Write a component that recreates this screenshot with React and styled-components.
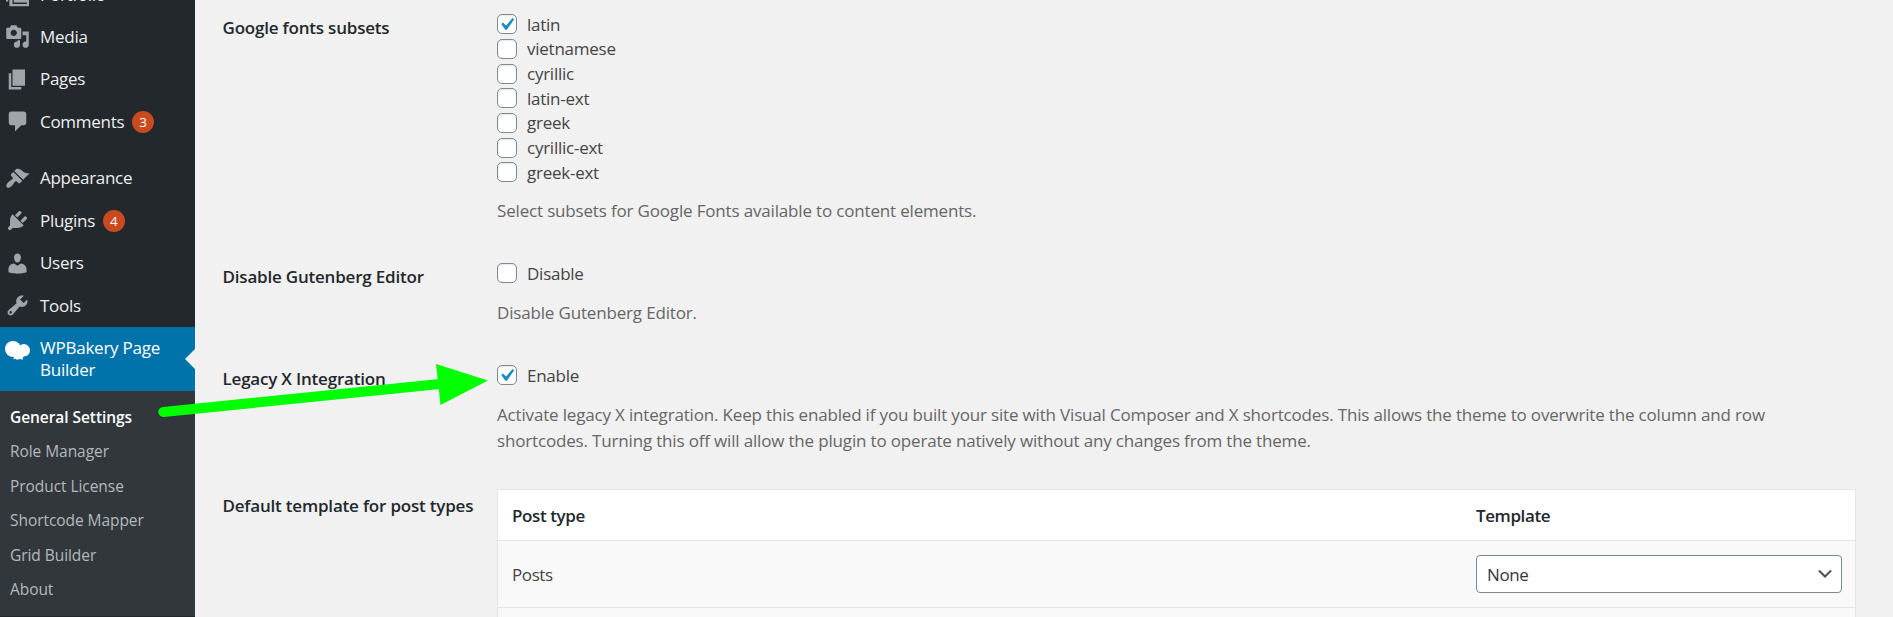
import styled, { createGlobalStyle } from "styled-components";

const icons = {
  portfolio:
    "M3.500 5h15.700v13.600H3.500zM6 5v11.700h11.500v-1.100H7V5zM.8 2h1.700v12.800H.8z",
  media:
    "M13 11V4c0-.55-.45-1-1-1h-1.670L9 1H5L3.670 3H2c-.55 0-1 .45-1 1v7c0 .55.45 1 1 1h10c.55 0 1-.45 1-1zM7 4.500c1.380 0 2.500 1.120 2.500 2.500S8.380 9.500 7 9.500 4.500 8.380 4.500 7 5.620 4.500 7 4.500zM14 6h5v10.500c0 1.380-1.120 2.500-2.500 2.500S14 17.880 14 16.500s1.120-2.500 2.500-2.500c.17 0 .34.02.5.05V9h-3V6zm-4 8.050V13h2v3.500c0 1.380-1.120 2.500-2.500 2.500S7 17.880 7 16.500 8.120 14 9.500 14c.17 0 .34.02.5.05z",
  pages: "M6 15V2h10v13H6zm-1 1h8v2H3V5h2v11z",
  comments:
    "M5 2h10c1.100 0 2 .9 2 2v7c0 1.100-.9 2-2 2h-2l-5 5v-5H5c-1.100 0-2-.9-2-2V4c0-1.100.9-2 2-2z",
  appearance:
    "M14.480 11.060L7.410 3.990l1.500-1.500c.5-.56 2.300-.47 3.510.32 1.210.8 1.430 1.280 2.910 2.100 1.180.64 2.450 1.260 4.450.85zm-.71.71L6.700 4.700 4.930 6.470c-.39.39-.39 1.020 0 1.410l1.060 1.060c.39.39.39 1.030 0 1.420-.6.6-1.430 1.110-2.210 1.690-.35.26-.7.53-1.010.84C1.430 14.230.4 16.080 1.400 17.070c.99 1 2.840-.03 4.180-1.360.31-.31.58-.66.85-1.020.57-.78 1.080-1.610 1.690-2.210.39-.39 1.020-.39 1.410 0l1.060 1.060c.39.39 1.020.39 1.410 0z",
  plugins:
    "M13.110 4.360L9.870 7.600 8 5.730l3.240-3.240c.35-.34 1.050-.2 1.560.32.52.51.66 1.210.31 1.550zm-8 1.770l.91-1.120 9.010 9.010-1.190.84c-.71.71-2.630 1.160-3.820 1.160H6.140L4.900 17.260c-.59.59-1.540.59-2.120 0-.59-.58-.59-1.530 0-2.120l1.240-1.240v-3.880c0-1.130.4-3.190 1.090-3.890zm7.260 3.970l3.240-3.240c.34-.35 1.040-.21 1.550.31.52.51.66 1.210.31 1.550l-3.240 3.250z",
  users:
    "M10 9.250c-2.270 0-2.730-3.440-2.730-3.440C7 4.020 7.820 2 9.970 2c2.160 0 2.980 2.020 2.710 3.810 0 0-.41 3.440-2.680 3.440zm0 2.570L12.720 10c2.390 0 4.520 2.330 4.520 4.530v2.490s-3.650 1.130-7.240 1.130c-3.650 0-7.240-1.130-7.240-1.130v-2.490c0-2.250 1.940-4.480 4.470-4.480z",
  tools:
    "M16.680 9.770c-1.340 1.340-3.300 1.670-4.950.99l-5.410 6.520c-.99.99-2.590.99-3.580 0s-.99-2.590 0-3.570l6.520-5.420c-.68-1.650-.35-3.610.99-4.950 1.280-1.280 3.120-1.620 4.720-1.060l-2.890 2.890 2.820 2.820 2.860-2.870c.53 1.580.18 3.390-1.080 4.650zM3.810 16.210c.4.39 1.040.39 1.430 0 .4-.4.4-1.040 0-1.430-.39-.4-1.030-.4-1.430 0-.39.39-.39 1.030 0 1.430z",
};

const topMenu = [
  { icon: "portfolio", label: "Portfolio" },
  { icon: "media", label: "Media" },
  { icon: "pages", label: "Pages" },
  { icon: "comments", label: "Comments", count: 3 },
];

const mainMenu = [
  { icon: "appearance", label: "Appearance" },
  { icon: "plugins", label: "Plugins", count: 4 },
  { icon: "users", label: "Users" },
  { icon: "tools", label: "Tools" },
];

const subMenu = [
  "General Settings",
  "Role Manager",
  "Product License",
  "Shortcode Mapper",
  "Grid Builder",
  "About",
];

const subsets = [
  "latin",
  "vietnamese",
  "cyrillic",
  "latin-ext",
  "greek",
  "cyrillic-ext",
  "greek-ext",
];

const MenuItem = ({ icon, label, count }) => (
  <MenuLink>
    <svg viewBox="0 0 20 20">
      <path fillRule="evenodd" d={icons[icon]} />
    </svg>
    <span>{label}</span>
    {count && <Badge>{count}</Badge>}
  </MenuLink>
);

const Option = ({ label, checked }) => (
  <OptionLabel>
    <CheckBox>
      {checked && (
        <svg viewBox="0 0 20 20">
          <path d="M14.830 4.890l1.340.94-5.810 8.380H9.020L5.780 9.670l1.340-1.250 2.570 2.400z" />
        </svg>
      )}
    </CheckBox>
    {label}
  </OptionLabel>
);

const App = () => {
  return (
    <>
      <GlobalStyle />
      <Page>
        <Sidebar>
          <Menu>
            {topMenu.map((item) => (
              <MenuItem key={item.label} {...item} />
            ))}
            <Separator />
            {mainMenu.map((item) => (
              <MenuItem key={item.label} {...item} />
            ))}
          </Menu>
          <ActiveLink>
            <svg viewBox="0 0 25 20">
              <circle cx="8" cy="8" r="8" />
              <circle cx="18.800" cy="9.300" r="6.200" />
              <path d="M7 13h14l-3 3.200-.5 2.500-2.500-.8-3 .8-1.500-1-2.500.6 1.500-2.800z" />
            </svg>
            <span>WPBakery Page Builder</span>
          </ActiveLink>
          <SubMenu>
            {subMenu.map((label, i) => (
              <SubLink key={label} $current={i === 0}>
                {label}
              </SubLink>
            ))}
          </SubMenu>
        </Sidebar>

        <Content>
          <Field $height={249}>
            <FieldName>Google fonts subsets</FieldName>
            <div>
              {subsets.map((label, i) => (
                <Option key={label} label={label} checked={i === 0} />
              ))}
              <Description>
                Select subsets for Google Fonts available to content elements.
              </Description>
            </div>
          </Field>
          <Field $height={102}>
            <FieldName>Disable Gutenberg Editor</FieldName>
            <div>
              <Option label="Disable" />
              <Description>Disable Gutenberg Editor.</Description>
            </div>
          </Field>
          <Field $height={127}>
            <FieldName>Legacy X Integration</FieldName>
            <div>
              <Option label="Enable" checked />
              <Description>
                Activate legacy X integration. Keep this enabled if you built
                your site with Visual Composer and X shortcodes. This allows the
                theme to overwrite the column and row
                <br />
                shortcodes. Turning this off will allow the plugin to operate
                natively without any changes from the theme.
              </Description>
            </div>
          </Field>
          <Field $height={140}>
            <FieldName>Default template for post types</FieldName>
            <Table>
              <HeadRow>
                <span>Post type</span>
                <span>Template</span>
              </HeadRow>
              <Row>
                <span>Posts</span>
                <Select>
                  None
                  <svg viewBox="0 0 20 20">
                    <path d="M5 6l5 5 5-5 2 1-7 7-7-7 2-1z" />
                  </svg>
                </Select>
              </Row>
              <Row />
            </Table>
          </Field>
        </Content>

        <Arrow viewBox="0 0 340 60">
          <path d="M13.300 37L290 9" />
          <polygon points="286,-11 338,5.500 290.500,30" />
        </Arrow>
      </Page>
    </>
  );
};

const GlobalStyle = createGlobalStyle`
  * {
    box-sizing: border-box;
  }
  body {
    margin: 0;
    overflow: hidden;
    background: #f1f1f1;
    color: #444;
    font-family: "Open Sans", "Noto Sans", sans-serif;
    font-size: 17px;
  }
`;

const Page = styled.div`
  position: relative;
  display: flex;
  height: 617px;
  overflow: hidden;
`;

const Sidebar = styled.nav`
  flex: 0 0 195px;
  background: #23282d;
`;

const Menu = styled.div`
  margin-top: -27px;
  height: 354px;
`;

const MenuLink = styled.a`
  display: flex;
  align-items: center;
  height: 42.5px;
  padding-left: 5px;
  color: #eee;
  font-size: 17px;
  letter-spacing: -0.28px;
  &:first-child {
    padding-top: 2px;
  }
  svg {
    width: 25px;
    height: 25px;
    margin-right: 10px;
    fill: #a0a5aa;
  }
  span {
    line-height: 22px;
  }
`;

const Separator = styled.div`
  height: 14px;
`;

const Badge = styled.b`
  display: grid;
  place-items: center;
  width: 22.5px;
  height: 22.5px;
  margin-left: 7.5px;
  border-radius: 50%;
  background: #ca4a1f;
  color: #fff;
  font-size: 13.5px;
  font-weight: 500;
  letter-spacing: 0;
`;

const ActiveLink = styled.a`
  position: relative;
  display: flex;
  align-items: flex-start;
  height: 64px;
  padding: 10px 20px 0 5px;
  background: #0073aa;
  color: #fff;
  letter-spacing: -0.24px;
  line-height: 22px;
  svg {
    flex: none;
    width: 25px;
    height: 20px;
    margin: 4px 10px 0 0;
    fill: #fff;
  }
  &::after {
    content: "";
    position: absolute;
    right: 0;
    top: 22px;
    border: 10px solid transparent;
    border-left: 0;
    border-right-color: #f1f1f1;
  }
`;

const SubMenu = styled.div`
  height: 225px;
  padding-top: 9px;
  background: #32373c;
`;

const SubLink = styled.a`
  display: block;
  height: 34.4px;
  padding-left: 10px;
  color: ${({ $current }) => ($current ? "#fff" : "#b4b9be")};
  font-size: 15.5px;
  font-weight: ${({ $current }) => ($current ? 600 : 400)};
  letter-spacing: -0.06px;
  line-height: 34px;
`;

const Content = styled.main`
  flex: 1;
  padding: 12px 37px 0 27px;
`;

const Field = styled.section`
  display: grid;
  grid-template-columns: 275px 1fr;
  height: ${({ $height }) => $height}px;
`;

const FieldName = styled.h2`
  margin: 4px 0 0;
  padding-left: 0.5px;
  color: #23282d;
  font-size: 17px;
  font-weight: 600;
  letter-spacing: -0.2px;
  line-height: 24px;
`;

const OptionLabel = styled.label`
  display: flex;
  align-items: center;
  height: 24.65px;
  letter-spacing: -0.25px;
`;

const CheckBox = styled.span`
  width: 20px;
  height: 20px;
  margin-right: 10px;
  border: 1px solid #7e8993;
  border-radius: 5px;
  background: #fff;
  box-shadow: inset 0 1px 2px rgba(0, 0, 0, 0.1);
  svg {
    display: block;
    width: 25px;
    height: 25px;
    margin: -3px 0 0 -4px;
    fill: #1e8cbe;
  }
`;

const Description = styled.p`
  margin: 14px 0 0;
  color: #666;
  letter-spacing: -0.17px;
  line-height: 26px;
  white-space: nowrap;
`;

const Table = styled.div`
  height: 140px;
  margin: -1px 0 0;
  border: 1px solid #e5e5e5;
  background: #f9f9f9;
`;

const Row = styled.div`
  display: grid;
  grid-template-columns: 964px 366px;
  align-items: center;
  height: 67px;
  padding-left: 14px;
  border-bottom: 1px solid #e5e5e5;
  letter-spacing: -0.4px;
`;

const HeadRow = styled(Row)`
  height: 51px;
  background: #fff;
  color: #23282d;
  font-weight: 600;
`;

const Select = styled.div`
  display: flex;
  align-items: center;
  justify-content: space-between;
  height: 38px;
  padding: 0 6px 0 10px;
  border: 1px solid #7e8993;
  border-radius: 4px;
  background: #fff;
  color: #32373c;
  svg {
    width: 20px;
    height: 20px;
    fill: #555;
  }
`;

const Arrow = styled.svg`
  position: absolute;
  left: 150px;
  top: 375px;
  width: 340px;
  height: 60px;
  overflow: visible;
  fill: #0f0;
  path {
    stroke: #0f0;
    stroke-width: 10;
    stroke-linecap: round;
  }
`;

export default App;
